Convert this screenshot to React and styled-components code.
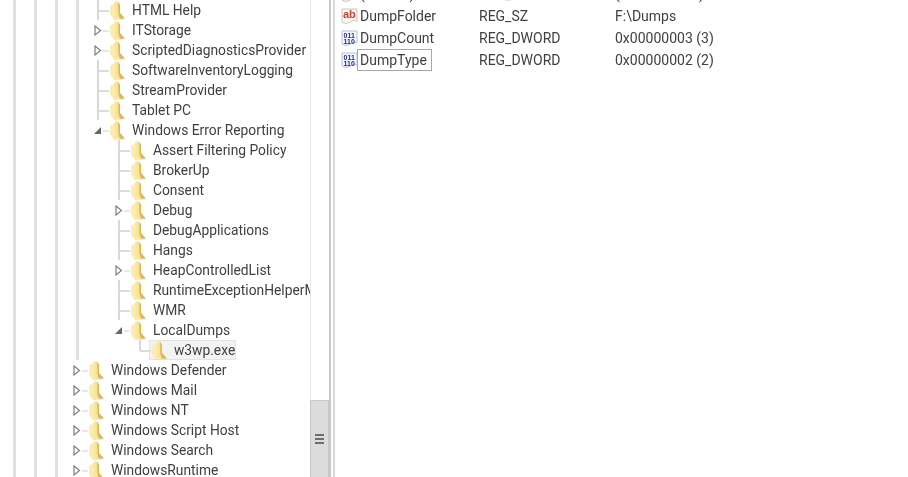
import React from "react";
import styled, { createGlobalStyle } from "styled-components";

const Global = createGlobalStyle`
  html, body { margin: 0; padding: 0; background: #fff; }
  body { font-family: Roboto, "Open Sans", sans-serif; color: #404040; }
`;

const Page = styled.div`
  display: flex;
  width: 908px;
  height: 477px;
  overflow: hidden;
  background: #fff;
  filter: blur(0.4px);
`;

const TreePane = styled.div`
  display: flex;
  width: 331px;
  box-sizing: border-box;
  flex: none;
  border-right: 2px solid #c8c8c8;
`;

const Tree = styled.ul`
  flex: 1;
  min-width: 0;
  margin: 0;
  padding: 0;
  list-style: none;
  overflow: hidden;
`;

const Row = styled.li`
  display: flex;
  align-items: center;
  height: 20px;
  padding-left: 4px;
  white-space: nowrap;
`;

const Guide = styled.span`
  flex: none;
  width: 21px;
  height: 20px;
  background: ${(p) =>
    p.$on ? "linear-gradient(#e0e0e0, #e0e0e0) 9px 0 / 3px 100% no-repeat" : "none"};
`;

const Branch = styled.span`
  position: relative;
  flex: none;
  width: 21px;
  height: 20px;
  display: block;
`;

const Stem = styled.span`
  position: absolute;
  left: 9px;
  top: 0;
  width: 2px;
  height: ${(p) => (p.$short ? "11px" : "20px")};
  background: #d8d8d8;
`;

const Elbow = styled.span`
  position: absolute;
  left: ${(p) => (p.$soft ? "15px" : "10px")};
  top: 10px;
  width: ${(p) => (p.$soft ? "6px" : "11px")};
  height: 2px;
  background: ${(p) => (p.$soft ? "#eee4ea" : "#dcdcdc")};
`;

const Toggle = styled.svg`
  position: absolute;
  left: 5px;
  top: 5px;
  width: 9px;
  height: 11px;
`;

const FolderIcon = styled.svg`
  flex: none;
  width: 17px;
  height: 20px;
  margin: 0 6px 0 0;
`;

const Label = styled.span`
  font-size: 13.8px;
  line-height: 20px;
`;

const Selected = styled.span`
  display: flex;
  align-items: center;
  height: 20px;
  padding-right: 1px;
  margin-left: -2px;
  padding-left: 2px;
  background: #f3f3f3;
  box-shadow: inset 0 0 0 1px #e4e4e4;
`;

const Scrollbar = styled.div`
  flex: none;
  width: 19px;
  display: flex;
  flex-direction: column;
  justify-content: flex-end;
  background: #fff;
  border-left: 1px solid #e6e6e6;
  box-sizing: border-box;
`;

const Thumb = styled.div`
  height: 76px;
  margin-left: -1px;
  display: flex;
  align-items: center;
  justify-content: center;
  background: #dcdcdc;
  border: 1px solid #c8c8c8;
  border-bottom: none;
`;

const Grip = styled.span`
  width: 9px;
  height: 10px;
  background: repeating-linear-gradient(#6e6e6e 0 2px, #dcdcdc 2px 4px);
`;

const ListPane = styled.div`
  flex: 1;
  margin-left: 2px;
  border-left: 2px solid #d8d8d8;
  overflow: hidden;
`;

const Values = styled.div`
  margin-top: -17px;
  padding-left: 6px;
`;

const ValueRow = styled.div`
  display: grid;
  grid-template-columns: 19px 119px 136px 1fr;
  align-items: center;
  height: 22px;
  font-size: 14px;
  white-space: nowrap;
`;

const Name = styled.span`
  ${(p) =>
    p.$editing &&
    `
    justify-self: start;
    margin-left: -3px;
    padding-left: 2px;
    height: 22px;
    line-height: 20px;
    box-sizing: border-box;
    width: 75px;
    background: #fff;
    border: 1px solid #a8a8a8;
  `}
`;

const Glyph = styled.svg`
  width: 18px;
  height: 20px;
`;

const GlyphText = styled.text`
  font-family: "Liberation Sans", sans-serif;
  font-weight: 700;
`;

const Folder = () => (
  <FolderIcon viewBox="0 0 17 20">
    <defs>
      <linearGradient id="fg" x1="0" y1="0" x2="1" y2="0">
        <stop offset="0" stopColor="#fbeeae" />
        <stop offset="1" stopColor="#f2d272" />
      </linearGradient>
      <linearGradient id="fd" x1="0" y1="0" x2="1" y2="1">
        <stop offset="0" stopColor="#e6b94a" />
        <stop offset="1" stopColor="#d9b45c" />
      </linearGradient>
    </defs>
    <path d="M1 6 L5 3 L6 1 L9 1 L9 16 L3 18 L1 14 Z" fill="#f9edb4" />
    <path d="M4 5 L8 1.5 L11 4 L11 13 L15 18 L4 19 Z" fill="url(#fg)" />
    <path d="M9 1.5 L11 5 L11 13 L16 18.5 L11 19 L9.5 14 Z" fill="url(#fd)" />
    <path d="M4 19 L16 18.5 L15 19.5 L5 19.8 Z" fill="#e8dcb8" />
  </FolderIcon>
);

const Arrow = ({ open }) =>
  open ? (
    <Toggle viewBox="0 0 9 11">
      <path d="M8 2 L8 9 L1 9 Z" fill="#666" />
    </Toggle>
  ) : (
    <Toggle viewBox="0 0 9 11">
      <path d="M2 1 L7.5 5.5 L2 10 Z" fill="#fff" stroke="#808080" strokeWidth="1.2" />
    </Toggle>
  );

const rows = [
  { d: 4, label: "HTML Help", stem: true },
  { d: 4, label: "ITStorage", arrow: "closed" },
  { d: 4, label: "ScriptedDiagnosticsProvider", arrow: "closed" },
  { d: 4, label: "SoftwareInventoryLogging", stem: true },
  { d: 4, label: "StreamProvider", stem: true },
  { d: 4, label: "Tablet PC", stem: true },
  { d: 4, label: "Windows Error Reporting", arrow: "open" },
  { d: 5, label: "Assert Filtering Policy", stem: true },
  { d: 5, label: "BrokerUp", stem: true },
  { d: 5, label: "Consent", stem: true },
  { d: 5, label: "Debug", arrow: "closed" },
  { d: 5, label: "DebugApplications", stem: true },
  { d: 5, label: "Hangs", stem: true },
  { d: 5, label: "HeapControlledList", arrow: "closed" },
  { d: 5, label: "RuntimeExceptionHelperModules", stem: true },
  { d: 5, label: "WMR", stem: true },
  { d: 5, label: "LocalDumps", arrow: "open" },
  { d: 6, label: "w3wp.exe", last: true, selected: true },
  { d: 3, label: "Windows Defender", arrow: "closed" },
  { d: 3, label: "Windows Mail", arrow: "closed" },
  { d: 3, label: "Windows NT", arrow: "closed" },
  { d: 3, label: "Windows Script Host", arrow: "closed" },
  { d: 3, label: "Windows Search", arrow: "closed" },
  { d: 3, label: "WindowsRuntime", arrow: "closed" },
];

const guideOn = (d, i) => i <= 2 || (i === 3 && d > 3);

const TreeRow = ({ d, label, arrow, stem, last, selected }) => {
  const cells = [];
  for (let i = 0; i < d; i++) {
    cells.push(<Guide key={i} $on={guideOn(d, i)} />);
  }
  const body = (
    <>
      <Folder />
      <Label>{label}</Label>
    </>
  );
  return (
    <Row>
      {cells}
      <Branch>
        {(stem || last) && <Stem $short={last} />}
        <Elbow $soft={!!arrow} />
        {arrow && <Arrow open={arrow === "open"} />}
      </Branch>
      {selected ? <Selected>{body}</Selected> : body}
    </Row>
  );
};

const StringIcon = () => (
  <Glyph viewBox="0 0 18 20">
    <path d="M1 3 H16 V15 Q13 13 9 16 Q5 19 1 16 Z" fill="#fdf8f4" stroke="#d0c2b8" />
    <GlyphText x="2" y="12" fontSize="11" fill="#c8432c">ab</GlyphText>
  </Glyph>
);

const BinaryIcon = () => (
  <Glyph viewBox="0 0 18 20">
    <path d="M1 3 H16 V15 Q13 13 9 16 Q5 19 1 16 Z" fill="#f4f7fd" stroke="#b4c0dc" />
    <GlyphText x="2.5" y="9.5" fontSize="7" fill="#1f2f96">011</GlyphText>
    <GlyphText x="2.5" y="16" fontSize="7" fill="#1f2f96">110</GlyphText>
  </Glyph>
);

const values = [
  { icon: "s", name: "(Default)", type: "REG_SZ", data: "(value not set)" },
  { icon: "s", name: "DumpFolder", type: "REG_SZ", data: "F:\\Dumps" },
  { icon: "b", name: "DumpCount", type: "REG_DWORD", data: "0x00000003 (3)" },
  { icon: "b", name: "DumpType", type: "REG_DWORD", data: "0x00000002 (2)", editing: true },
];

export default function App() {
  return (
    <>
      <Global />
      <Page>
        <TreePane>
          <Tree>
            {rows.map((r) => (
              <TreeRow key={r.label} {...r} />
            ))}
          </Tree>
          <Scrollbar>
            <Thumb>
              <Grip />
            </Thumb>
          </Scrollbar>
        </TreePane>
        <ListPane>
          <Values>
            {values.map((v) => (
              <ValueRow key={v.name}>
                {v.icon === "s" ? <StringIcon /> : <BinaryIcon />}
                <Name $editing={v.editing}>{v.name}</Name>
                <span>{v.type}</span>
                <span>{v.data}</span>
              </ValueRow>
            ))}
          </Values>
        </ListPane>
      </Page>
    </>
  );
}
